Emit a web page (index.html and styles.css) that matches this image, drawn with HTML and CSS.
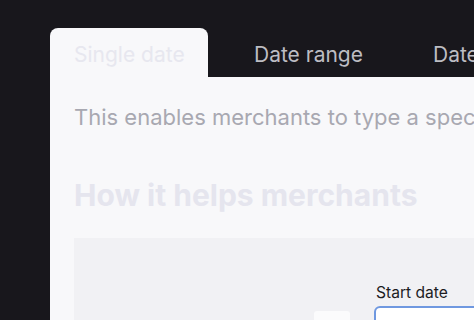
FILE: index.html
```html
<!DOCTYPE html>
<html>
<head>
<meta charset="utf-8">
<link rel="stylesheet" href="styles.css">
</head>
<body>
<div class="card">
  <div class="tabs">
    <div class="tab active">Single date</div>
    <div class="tab">Date range</div>
    <div class="tab">Date list</div>
  </div>
  <div class="panel">
    <p class="lead">This enables merchants to type a specific date</p>
    <h2 class="title">How it helps merchants</h2>
    <div class="demo">
      <div class="chip"></div>
      <div class="field">
        <label class="label">Start date</label>
        <div class="input">Mar 12, 2024</div>
      </div>
    </div>
  </div>
</div>
</body>
</html>
```

FILE: styles.css
```css
html, body {
  margin: 0;
  padding: 0;
  background: #18171c;
  width: 474px;
  height: 320px;
  overflow: hidden;
  font-family: Inter, "Noto Sans", sans-serif;
}
.card {
  margin: 28px 0 0 50px;
  width: 700px;
}
.tabs {
  display: flex;
  gap: 22px;
  height: 49px;
}
.tab {
  padding: 4px 24px 0;
  font-size: 21px;
  line-height: 45px;
  color: #bdbdc3;
  white-space: nowrap;
}
.tab.active {
  background: #f8f8fa;
  color: #e7e7ef;
  border-radius: 8px 8px 0 0;
  width: 110px;
}
.panel {
  background: #f8f8fa;
  padding: 18px 0 0 24px;
  height: 300px;
}
.lead {
  margin: 0;
  font-size: 22px;
  line-height: 44px;
  color: #a8a8b1;
  white-space: nowrap;
}
.title {
  margin: 34px 0 0;
  font-size: 30px;
  font-weight: 700;
  line-height: 44px;
  color: #e5e5ee;
  white-space: nowrap;
}
.demo {
  margin-top: 21px;
  background: #f1f1f4;
  height: 200px;
  display: flex;
  align-items: flex-start;
  padding-top: 46px;
  padding-left: 240px;
}
.chip {
  width: 36px;
  height: 20px;
  background: #fbfbfc;
  margin-top: 27px;
  border-radius: 3px;
}
.field {
  margin-left: 24px;
  display: flex;
  flex-direction: column;
}
.label {
  font-size: 15.6px;
  color: #1c1c1f;
  line-height: 18px;
  margin-left: 2px;
}
.input {
  margin-top: 4px;
  width: 160px;
  height: 34px;
  border: 2px solid #6f98e0;
  border-radius: 6px;
  background: #ffffff;
  font-size: 15px;
  padding: 8px 8px;
  box-sizing: border-box;
  color: #1c1c1f;
}
```
